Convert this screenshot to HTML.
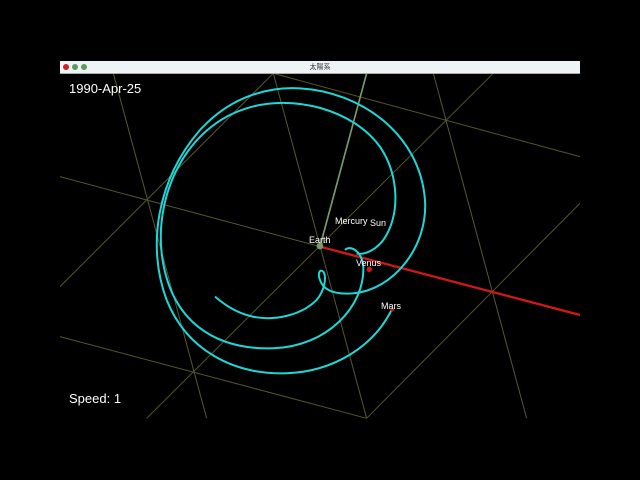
<!DOCTYPE html><html><head><style>
body{margin:0;background:#000;width:640px;height:480px;overflow:hidden;font-family:"Liberation Sans","Noto Sans CJK JP",sans-serif}
.win{position:absolute;left:60px;top:61px;width:520px;height:359px;background:#000}
.bar{position:absolute;left:0;top:0;width:520px;height:12px;background:#eef3f5;border-bottom:1px solid #aaa}
.d{position:absolute;top:3px;width:6px;height:6px;border-radius:50%}
</style></head><body>
<div class="win">
<svg width="520" height="359" viewBox="60 61 520 359" style="position:absolute;left:0;top:0">
<g transform="translate(60,60) scale(0.3333)" fill="none">
<g stroke="#55552c" stroke-width="3">
<line x1="640" y1="40" x2="1560" y2="290"/>
<line x1="0" y1="350" x2="780" y2="560"/>
<line x1="0" y1="830" x2="920" y2="1075"/>
<line x1="1300" y1="40" x2="260" y2="1075"/>
<line x1="640" y1="40" x2="0" y2="680"/>
<line x1="1560" y1="430" x2="920" y2="1075"/>
</g>
<g stroke="#4f5a3a" stroke-width="3">
<line x1="160" y1="40" x2="440" y2="1075"/>
<line x1="640" y1="40" x2="920" y2="1075"/>
<line x1="1120" y1="40" x2="1400" y2="1075"/>
</g>
<line x1="920" y1="40" x2="780" y2="560" stroke="#7a9a6a" stroke-width="5"/>
<line x1="780" y1="560" x2="1560" y2="765" stroke="#d01818" stroke-width="7"/>
<g stroke="#1ed8d8" stroke-width="6">
<path d="M995,750 C940,860 820,935 680,940 C520,945 380,870 320,720 C260,560 290,360 420,210 C520,100 640,80 720,85 C900,95 1080,220 1095,420 C1105,560 1000,690 880,700 C820,705 790,690 780,660 C772,640 780,625 790,635 C800,650 795,690 770,720 C720,770 640,780 590,772 C540,765 500,740 465,710"/>
<path d="M855,570 C870,555 905,570 910,620 C915,740 800,860 640,865 C470,870 330,790 305,580 C285,400 380,200 560,145 C700,100 880,150 960,260 C1020,350 1020,470 970,540 C940,580 900,585 890,580"/>
</g>
<circle cx="780" cy="558" r="10" fill="#7a9a6a"/>
<circle cx="928" cy="628" r="8" fill="#d01818"/>
<circle cx="997" cy="750" r="5" fill="#d01818"/>
</g>
<g fill="#fff" font-size="9">
<text x="335" y="224">Mercury</text><text x="370" y="226">Sun</text>
<text x="309" y="243">Earth</text>
<text x="356" y="266">Venus</text>
<text x="381" y="309">Mars</text>
</g>
<text x="69" y="93" fill="#fff" font-size="13">1990-Apr-25</text>
<text x="69" y="403" fill="#fff" font-size="13">Speed: 1</text>
</svg>
<div class="bar"><div class="d" style="left:3px;background:#d02020"></div><div class="d" style="left:12px;background:#5a9a5a"></div><div class="d" style="left:21px;background:#5a9a5a"></div>
<div style="position:absolute;left:0;width:520px;top:1px;text-align:center;font-size:7px;color:#333">太陽系</div></div>
</div>
</body></html>
